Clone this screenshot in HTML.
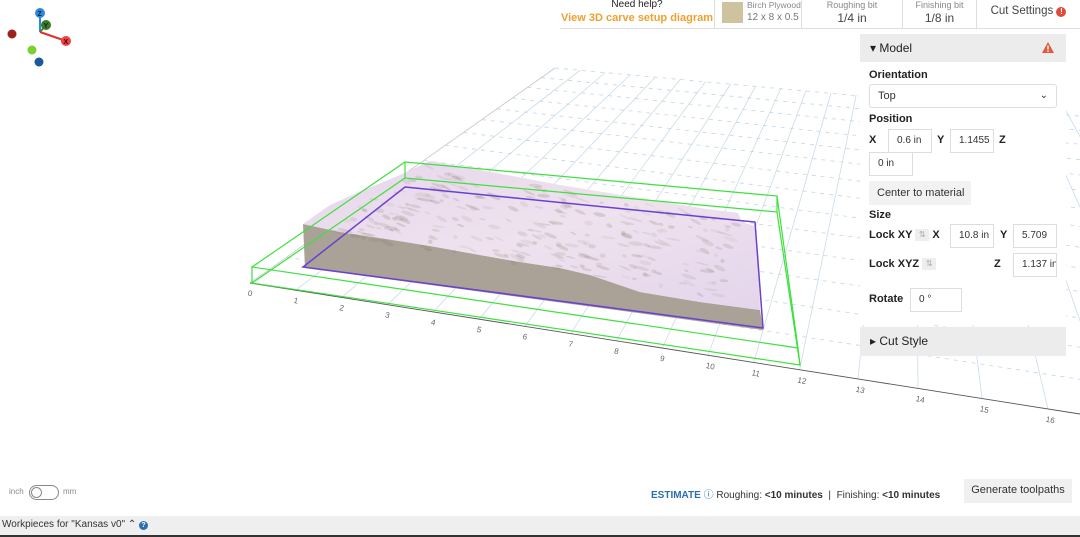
<!DOCTYPE html>
<html><head><meta charset="utf-8"><style>
*{box-sizing:border-box;margin:0;padding:0}
body{width:1080px;height:537px;overflow:hidden;background:#fff;font-family:"Liberation Sans",sans-serif;position:relative;color:#222}
svg#scene{position:absolute;left:0;top:0}
.top{position:absolute;top:0;height:29px;border-right:1px solid #ddd;border-bottom:1px solid #ddd;text-align:center;background:#fff;white-space:nowrap;overflow:hidden}
.sm{font-size:9px;color:#888;line-height:10px;height:10px;overflow:hidden}
.bg{font-size:12px;color:#444;line-height:16px}
.panel{position:absolute;left:860px;top:34px;width:206px;height:291px;background:#fff}
.ph{position:absolute;left:860px;width:206px;height:28px;background:#ececec;font-size:12px;line-height:28px;padding-left:10px;color:#222}
.lbl{position:absolute;font-size:11px;font-weight:bold;color:#222;white-space:nowrap}
.inp{position:absolute;border:1px solid #ddd;background:#fff;font-size:10px;color:#333;height:24px;line-height:22px;padding-left:8px;overflow:hidden;white-space:nowrap}
.lk{display:inline-block;width:14px;height:12px;background:#eee;font-size:8px;color:#aaa;text-align:center;line-height:12px;font-weight:normal;vertical-align:middle}
</style></head><body>
<svg id="scene" width="1080" height="537" viewBox="0 0 1080 537"></svg>

<div class="top" style="left:560px;width:155px;">
 <div class="sm" style="color:#222;font-size:10px">Need help?</div>
 <div style="font-size:11px;font-weight:bold;color:#f0a030;line-height:16px">View 3D carve setup diagram</div>
</div>
<div class="top" style="left:715px;width:87px;">
 <div style="position:absolute;left:7px;top:2px;width:21px;height:21px;background:#cfc29e"></div>
 <div class="sm" style="position:absolute;left:32px;top:0;font-size:8.5px">Birch Plywood</div>
 <div style="position:absolute;left:32px;top:10px;font-size:10px;color:#777;line-height:16px">12 x 8 x 0.5 in</div>
</div>
<div class="top" style="left:802px;width:101px;"><div class="sm">Roughing bit</div><div class="bg">1/4 in</div></div>
<div class="top" style="left:903px;width:74px;"><div class="sm">Finishing bit</div><div class="bg">1/8 in</div></div>
<div class="top" style="left:977px;width:103px;border-right:none"><div style="font-size:11.5px;color:#444;line-height:23px">Cut Settings <span style="display:inline-block;width:10px;height:10px;border-radius:50%;background:#e04b3c;color:#fff;font-size:8px;line-height:10px;font-weight:bold">!</span></div></div>

<div class="panel"></div>
<div class="ph" style="top:34px">▾ Model<svg style="position:absolute;right:12px;top:8px" width="12" height="11"><path d="M6 0L12 11H0Z" fill="#e05a3c"/><rect x="5.3" y="3.5" width="1.4" height="4" fill="#fff"/><rect x="5.3" y="8.4" width="1.4" height="1.4" fill="#fff"/></svg></div>
<div class="lbl" style="left:869px;top:69px">Orientation</div>
<div class="inp" style="left:869px;top:84px;width:188px;height:24px;border-radius:3px;font-size:11px">Top<span style="position:absolute;right:8px;top:0;font-size:10px">⌄</span></div>
<div class="lbl" style="left:869px;top:113px">Position</div>
<div class="lbl" style="left:869px;top:134px">X</div>
<div class="inp" style="left:888px;top:129px;width:44px">0.6 in</div>
<div class="lbl" style="left:937px;top:134px">Y</div>
<div class="inp" style="left:950px;top:129px;width:44px">1.1455</div>
<div class="lbl" style="left:999px;top:134px">Z</div>
<div class="inp" style="left:869px;top:152px;width:44px">0 in</div>
<div style="position:absolute;left:869px;top:181px;width:102px;height:24px;background:#f2f2f2;font-size:11px;line-height:24px;padding-left:8px;color:#333">Center to material</div>
<div class="lbl" style="left:869px;top:209px">Size</div>
<div class="lbl" style="left:869px;top:229px">Lock XY <span class="lk">⇅</span> X</div>
<div class="inp" style="left:950px;top:224px;width:44px">10.8 in</div>
<div class="lbl" style="left:1000px;top:229px">Y</div>
<div class="inp" style="left:1013px;top:224px;width:44px">5.709</div>
<div class="lbl" style="left:869px;top:258px">Lock XYZ <span class="lk">⇅</span></div>
<div class="lbl" style="left:994px;top:258px">Z</div>
<div class="inp" style="left:1013px;top:253px;width:44px">1.137 in</div>
<div class="lbl" style="left:869px;top:293px">Rotate</div>
<div class="inp" style="left:910px;top:288px;width:52px">0 °</div>
<div class="ph" style="top:327px;height:29px;line-height:29px">▸ Cut Style</div>

<div style="position:absolute;left:9px;top:487px;font-size:8px;color:#888">inch</div>
<div style="position:absolute;left:29px;top:485px;width:30px;height:15px;border:1px solid #888;border-radius:8px"><div style="position:absolute;left:1px;top:1px;width:11px;height:11px;border-radius:50%;border:1px solid #888"></div></div>
<div style="position:absolute;left:63px;top:487px;font-size:8px;color:#888">mm</div>
<div style="position:absolute;left:651px;top:486px;font-size:10px;color:#333;white-space:nowrap"><b style="color:#2a6fb0">ESTIMATE</b> <span style="color:#2a6fb0">ⓘ</span> Roughing: <b>&lt;10 minutes</b> &nbsp;|&nbsp; Finishing: <b>&lt;10 minutes</b></div>
<div style="position:absolute;left:964px;top:479px;width:108px;height:24px;background:#f0f0f0;font-size:11px;line-height:22px;text-align:center;color:#333">Generate toolpaths</div>
<div style="position:absolute;left:0;top:516px;width:1080px;height:19px;background:#efefef;font-size:10px;line-height:17px;padding-left:2px;color:#333">Workpieces for "Kansas v0" ⌃ <span style="display:inline-block;width:9px;height:9px;border-radius:50%;background:#2a6fb0;color:#fff;font-size:7px;line-height:9px;text-align:center;font-weight:bold">?</span></div>
<div style="position:absolute;left:0;top:535px;width:1080px;height:2px;background:#333"></div>

<script>
var s=document.getElementById('scene'),h='';
function F(i){var x=i<=12?250+45.8*i:800+[0,58,118,182,248][i-12];return [x,283+0.158*(x-250)];}
function E(i){if(i<=12)return [555+25.1*i,68+2.25*i];return [856+30*(i-12),95+2.3*(i-12)];}
for(var i=0;i<=20;i++){var f,e;if(i<=16){f=F(i);e=E(i);}else{var x=1048+66*(i-16);f=[x,283+0.158*(x-250)];e=[976+30*(i-16),104+2.3*(i-16)];}
 h+='<line x1="'+f[0]+'" y1="'+f[1]+'" x2="'+e[0]+'" y2="'+e[1]+'" stroke="#c9dbec" stroke-width="0.8"/>';}
var ss=[.12,.23,.33,.42,.5,.57,.64,.7,.76,.81,.86,.91,.955,1];
var f0=F(0),e0=E(0),f1=[1380,283+0.158*1130],e1=[1100,118];
ss.forEach(function(t){var a=[f0[0]+(e0[0]-f0[0])*t,f0[1]+(e0[1]-f0[1])*t],b=[f1[0]+(e1[0]-f1[0])*t,f1[1]+(e1[1]-f1[1])*t];
 h+='<line x1="'+a[0]+'" y1="'+a[1]+'" x2="'+b[0]+'" y2="'+b[1]+'" stroke="#c3d5e8" stroke-width="0.8" stroke-dasharray="4 5"/>';});
h+='<line x1="250" y1="283" x2="555" y2="68" stroke="#ccc" stroke-width="0.8"/>';
h+='<line x1="250" y1="283" x2="1080" y2="414" stroke="#555" stroke-width="0.9"/>';
for(var i=0;i<=16;i++){var f=F(i);h+='<text x="'+(f[0]-2)+'" y="'+(f[1]+13)+'" font-size="8" fill="#666" font-family="Liberation Sans" transform="rotate(12 '+f[0]+' '+(f[1]+10)+')">'+i+'</text>';}
h+='<defs><linearGradient id="tg" x1="0" y1="0" x2="1" y2="1"><stop offset="0" stop-color="#e6d6ec"/><stop offset=".5" stop-color="#efe2ee"/><stop offset="1" stop-color="#e4d5ec"/></linearGradient></defs>';
h+='<polygon points="303,224 305,268 763,330 760,310 700,302 640,292 590,275 560,268 520,262 480,255 430,246 380,238 340,232" fill="#aaa197"/>';
h+='<polygon points="303,224 330,205 350,196 400,175 430,161 470,168 560,185 640,198 700,208 738,213 742,222 755,226 758,260 760,310 700,302 640,292 590,275 560,268 520,262 480,255 430,246 380,238 340,232" fill="url(#tg)"/>';
var r=7;function rnd(){r=(r*9301+49297)%233280;return r/233280;}
for(var k=0;k<260;k++){var u=rnd(),v=rnd();
 var x=(1-u)*(1-v)*320+u*(1-v)*720+(1-u)*v*430+u*v*740, y=(1-u)*(1-v)*232+u*(1-v)*298+(1-u)*v*165+u*v*220;
 h+='<ellipse cx="'+x.toFixed(1)+'" cy="'+y.toFixed(1)+'" rx="'+(2+rnd()*6).toFixed(1)+'" ry="'+(0.8+rnd()*1.5).toFixed(1)+'" fill="#8a8070" opacity="'+(0.08+rnd()*0.18).toFixed(2)+'" transform="rotate('+(5+rnd()*25).toFixed(0)+' '+x.toFixed(1)+' '+y.toFixed(1)+')"/>';}
h+='<polygon points="405,187 755,222 763,328 303,267" fill="none" stroke="#6a40d0" stroke-width="1.5"/>';
var G='#3fe03f';
h+='<polygon points="252,267 405,162 777,196 798,348" fill="none" stroke="'+G+'" stroke-width="1.2"/>';
h+='<polygon points="252,283 405,178 777,212 800,365" fill="none" stroke="'+G+'" stroke-width="1.2"/>';
[[252,267,252,283],[405,162,405,178],[777,196,777,212],[798,348,800,365]].forEach(function(l){h+='<line x1="'+l[0]+'" y1="'+l[1]+'" x2="'+l[2]+'" y2="'+l[3]+'" stroke="'+G+'" stroke-width="1.2"/>';});
h+='<line x1="40" y1="32" x2="40" y2="14" stroke="#2a8ae0" stroke-width="2"/><line x1="40" y1="32" x2="46" y2="25" stroke="#4a8a2a" stroke-width="2"/><line x1="40" y1="32" x2="66" y2="41" stroke="#e03030" stroke-width="2"/>';
h+='<circle cx="40" cy="13" r="5" fill="#2a8ae0"/><circle cx="46" cy="25" r="5" fill="#3a7a25"/><circle cx="66" cy="41" r="5" fill="#f04040"/><circle cx="12" cy="34" r="4.5" fill="#a02020"/><circle cx="32" cy="50" r="4.5" fill="#7ad030"/><circle cx="39" cy="62" r="4.5" fill="#1a5a9a"/>';
h+='<text x="37.5" y="16" font-size="7" font-weight="bold" fill="#123">Z</text><text x="43.5" y="28" font-size="7" font-weight="bold" fill="#123">Y</text><text x="63.5" y="44" font-size="7" font-weight="bold" fill="#300">X</text>';
s.innerHTML=h;
</script>
</body></html>
